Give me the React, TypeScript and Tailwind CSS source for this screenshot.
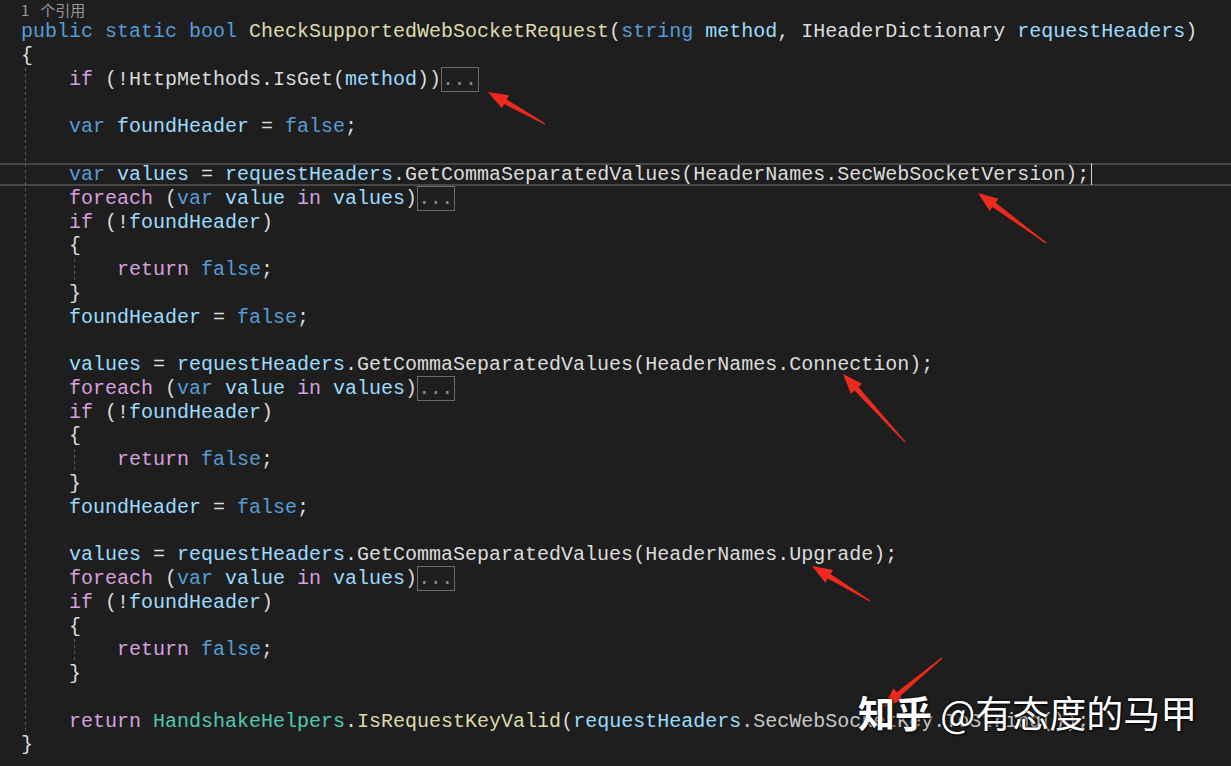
import React from "react";

type Tok = [string, string];

const kw = "text-[#569cd6]";
const ctl = "text-[#d8a0df]";
const fn = "text-[#dcdcaa]";
const vr = "text-[#9cdcfe]";
const ty = "text-[#4ec9b0]";
const pl = "text-[#dcdcdc]";

type Line = { toks: Tok[]; fold?: boolean; current?: boolean };

const guardBlock = (member: string): Line[] => [
  { toks: [["    ", pl], ["values", vr], [" = ", pl], ["requestHeaders", vr], [`.GetCommaSeparatedValues(HeaderNames.${member});`, pl]] },
  { toks: [["    ", pl], ["foreach", ctl], [" (", pl], ["var ", kw], ["value ", vr], ["in ", ctl], ["values", vr], [")", pl]], fold: true },
  { toks: [["    ", pl], ["if", ctl], [" (!", pl], ["foundHeader", vr], [")", pl]] },
  { toks: [["    {", pl]] },
  { toks: [["        ", pl], ["return ", ctl], ["false", kw], [";", pl]] },
  { toks: [["    }", pl]] },
];

const lines: Line[] = [
  {
    toks: [
      ["public static bool ", kw],
      ["CheckSupportedWebSocketRequest", fn],
      ["(", pl],
      ["string ", kw],
      ["method", vr],
      [", IHeaderDictionary ", pl],
      ["requestHeaders", vr],
      [")", pl],
    ],
  },
  { toks: [["{", pl]] },
  { toks: [["    ", pl], ["if", ctl], [" (!HttpMethods.IsGet(", pl], ["method", vr], ["))", pl]], fold: true },
  { toks: [] },
  { toks: [["    ", pl], ["var ", kw], ["foundHeader", vr], [" = ", pl], ["false", kw], [";", pl]] },
  { toks: [] },
  {
    toks: [["    ", pl], ["var ", kw], ["values", vr], [" = ", pl], ["requestHeaders", vr], [".GetCommaSeparatedValues(HeaderNames.SecWebSocketVersion);", pl]],
    current: true,
  },
  ...guardBlock("SecWebSocketVersion").slice(1),
  { toks: [["    ", pl], ["foundHeader", vr], [" = ", pl], ["false", kw], [";", pl]] },
  { toks: [] },
  ...guardBlock("Connection"),
  { toks: [["    ", pl], ["foundHeader", vr], [" = ", pl], ["false", kw], [";", pl]] },
  { toks: [] },
  ...guardBlock("Upgrade"),
  { toks: [] },
  {
    toks: [
      ["    ", pl],
      ["return ", ctl],
      ["HandshakeHelpers", ty],
      [".", pl],
      ["IsRequestKeyValid", fn],
      ["(", pl],
      ["requestHeaders", vr],
      [".SecWebSocketKey.ToString());", "text-[#c8c8c8]"],
    ],
  },
  { toks: [["}", pl]] },
];

// tip -> tail, red annotation arrows
function arrowPoints(tx: number, ty2: number, ex: number, ey: number) {
  const dx = ex - tx;
  const dy = ey - ty2;
  const len = Math.hypot(dx, dy);
  const ux = dx / len;
  const uy = dy / len;
  const nx = -uy;
  const ny = ux;
  const head = 20;
  const bx = tx + ux * head;
  const by = ty2 + uy * head;
  const pts = [
    [tx, ty2],
    [bx + nx * 7.5, by + ny * 7.5],
    [bx + nx * 2.6, by + ny * 2.6],
    [ex + nx * 0.6, ey + ny * 0.6],
    [ex - nx * 0.6, ey - ny * 0.6],
    [bx - nx * 2.6, by - ny * 2.6],
    [bx - nx * 7.5, by - ny * 7.5],
  ];
  return pts.map((p) => `${p[0].toFixed(1)},${p[1].toFixed(1)}`).join(" ");
}

const arrows: [number, number, number, number][] = [
  [488, 92, 545, 124],
  [978, 193, 1046, 243],
  [843, 374, 905, 442],
  [812, 566, 870, 601],
  [883, 707, 942, 658],
];

export default function App() {
  return (
    <div className="relative w-[1231px] h-[766px] overflow-hidden bg-[#1e1e1e] font-['Liberation_Mono',monospace]">
      <div className="h-[20px] pl-[21px] flex items-center gap-[11px] text-[15px] leading-[20px] text-[#999999] font-['Noto_Sans_CJK_SC',sans-serif]">
        <span>1</span>
        <span>个引用</span>
      </div>
      {lines.map((line, i) => (
        <div
          key={i}
          className={
            "h-[23.77px] leading-[21px] pl-[21px] text-[20px] whitespace-pre flex items-center " +
            (line.current ? "border-y-2 border-[#464646]" : "")
          }
        >
          {line.toks.map((t, j) => (
            <span key={j} className={t[1]}>
              {t[0]}
            </span>
          ))}
          {line.fold && (
            <span className="inline-block h-[25px] w-[38px] border border-[#6b6b6b] text-[#8a8a8a] leading-[24px] tracking-[-0.5px]">
              ...
            </span>
          )}
          {line.current && <span className="inline-block w-px h-[22px] ml-[2px] bg-[#d4d4d4]" />}
        </div>
      ))}

      <svg className="absolute inset-0 pointer-events-none" width="1231" height="766">
        <line x1="25.5" y1="68" x2="25.5" y2="733" stroke="#5c5c5c" strokeWidth="1" strokeDasharray="3 3" />
        <line x1="74.5" y1="259" x2="74.5" y2="283" stroke="#5c5c5c" strokeWidth="1" strokeDasharray="3 3" />
        <line x1="74.5" y1="449" x2="74.5" y2="473" stroke="#5c5c5c" strokeWidth="1" strokeDasharray="3 3" />
        <line x1="74.5" y1="639" x2="74.5" y2="663" stroke="#5c5c5c" strokeWidth="1" strokeDasharray="3 3" />
        {arrows.map((a, i) => (
          <polygon key={i} points={arrowPoints(a[0], a[1], a[2], a[3])} fill="#ee2a1e" />
        ))}
      </svg>

      <div className="absolute left-[858px] top-[694px] text-[37px] leading-none text-white whitespace-nowrap font-['Noto_Sans_CJK_SC',sans-serif] [text-shadow:0_0_3px_rgba(0,0,0,0.9),1px_1px_2px_rgba(0,0,0,0.8)]">
        <span className="font-bold">知乎</span> @有态度的马甲
      </div>
    </div>
  );
}
